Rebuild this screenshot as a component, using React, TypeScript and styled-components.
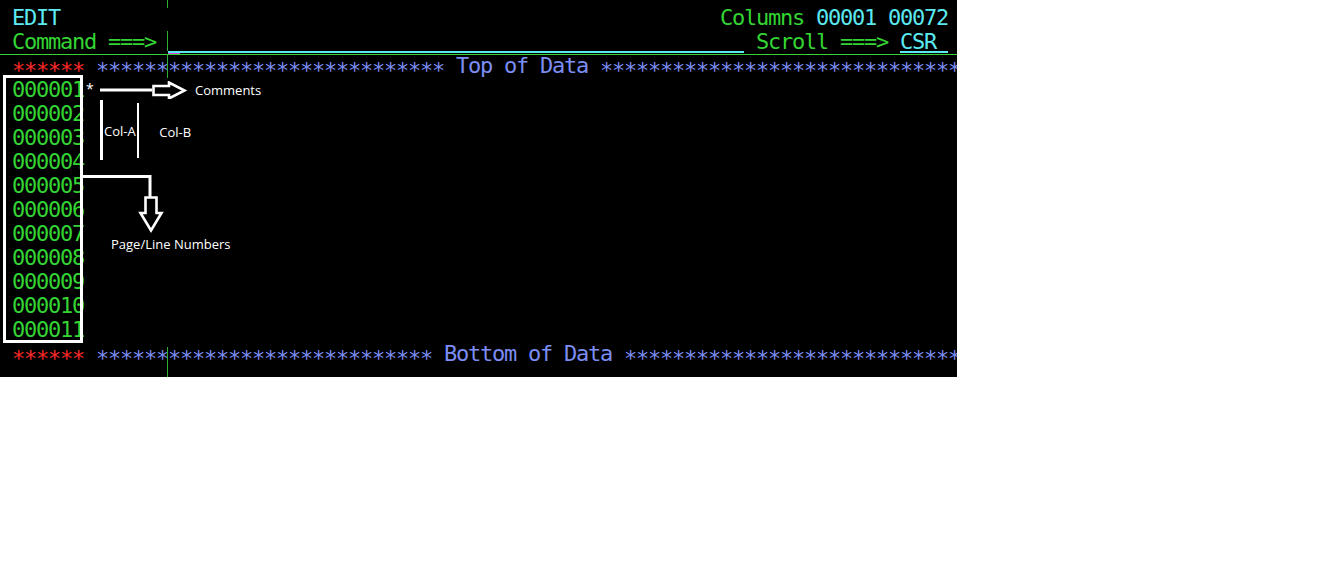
import styled, { createGlobalStyle } from "styled-components";

const GlobalStyle = createGlobalStyle`
  html, body {
    margin: 0;
    padding: 0;
    background: #ffffff;
  }
`;

const CYAN = "#5be9f2";
const GREEN = "#33d433";
const RED = "#ff2a2a";
const BLUE = "#7c8ef4";

const sp = (n: number) => " ".repeat(n);
const stars = (n: number) => "*".repeat(n);

const Screen = styled.div`
  position: relative;
  width: 957px;
  height: 377px;
  box-sizing: border-box;
  padding-top: 6px;
  background: #000000;
  overflow: hidden;
  font-family: "DejaVu Sans Mono", "Liberation Mono", monospace;
  font-size: 22px;
  letter-spacing: -1.245px;
  line-height: 24px;
  white-space: pre;
`;

const Row = styled.div`
  display: flex;
  height: 24px;
`;

const Text = styled.span<{ $color: string }>`
  color: ${(p) => p.$color};
`;

/* terminal asterisks sit on the middle of the cell */
const Stars = styled.span<{ $color: string }>`
  position: relative;
  top: 5px;
  color: ${(p) => p.$color};
`;

const Field = styled.span<{ $cursor?: boolean }>`
  color: ${CYAN};
  background: ${(p) =>
    p.$cursor
      ? `linear-gradient(#e040e0, #e040e0) left bottom / 12px 1px no-repeat,`
      : ""}
    linear-gradient(${CYAN}, ${CYAN}) left bottom 1px / 100% 2px no-repeat;
`;

const Separator = styled.div`
  height: 1px;
  margin-bottom: -1px;
  background: ${GREEN};
`;

const Crosshair = styled.div<{ $top: number; $height: number }>`
  position: absolute;
  left: 167px;
  top: ${(p) => p.$top}px;
  width: 1px;
  height: ${(p) => p.$height}px;
  background: #2fae2f;
`;

const Annotations = styled.div`
  position: absolute;
  inset: 0;
  pointer-events: none;
  font-family: "Open Sans", "Liberation Sans", sans-serif;
  font-size: 13px;
  line-height: 16px;
  letter-spacing: 0;
  color: #ffffff;
`;

const NumberBox = styled.div`
  position: absolute;
  left: 3px;
  top: 75px;
  width: 80px;
  height: 268px;
  box-sizing: border-box;
  border: 3px solid #ffffff;
`;

const CommentCallout = styled.div`
  position: absolute;
  left: 86px;
  top: 81px;
  height: 18px;
  display: flex;
  align-items: center;
  gap: 6px;
`;

const Star = styled.span`
  font-size: 14px;
  width: 7px;
  margin-top: -3px;
`;

const ColumnCallout = styled.div`
  position: absolute;
  left: 100px;
  top: 100px;
  height: 60px;
  display: flex;
  align-items: center;
  gap: 1px;
`;

const ColumnBar = styled.div<{ $height: number; $width: number }>`
  width: ${(p) => p.$width}px;
  height: ${(p) => p.$height}px;
  background: #ffffff;
`;

const ColumnLabel = styled.span<{ $gap?: number }>`
  margin-left: ${(p) => p.$gap ?? 0}px;
  margin-top: ${(p) => (p.$gap ? 4 : 1)}px;
`;

const PageLabel = styled.span`
  position: absolute;
  left: 111px;
  top: 236px;
`;

const Drawing = styled.svg`
  display: block;
  flex: none;
`;

const Connector = styled.svg`
  position: absolute;
  left: 80px;
  top: 170px;
`;

const lineNumbers = Array.from({ length: 11 }, (_, i) =>
  String(i + 1).padStart(6, "0")
);

export default function App() {
  return (
    <>
      <GlobalStyle />
      <Screen>
        <Row>
          <Text $color={CYAN}>{sp(1)}EDIT</Text>
          <Text $color={GREEN}>{sp(55)}Columns </Text>
          <Text $color={CYAN}>00001 00072</Text>
        </Row>
        <Row>
          <Text $color={GREEN}>{sp(1)}Command ===&gt;{sp(1)}</Text>
          <Field $cursor>{sp(48)}</Field>
          <Text $color={GREEN}>{sp(1)}Scroll ===&gt;{sp(1)}</Text>
          <Field>CSR </Field>
        </Row>
        <Separator />
        <Row>
          <Text $color={RED}>{sp(1)}</Text>
          <Stars $color={RED}>{stars(6)}</Stars>
          <Text $color={BLUE}>{sp(1)}</Text>
          <Stars $color={BLUE}>{stars(29)}</Stars>
          <Text $color={BLUE}> Top of Data </Text>
          <Stars $color={BLUE}>{stars(30)}</Stars>
        </Row>
        {lineNumbers.map((n) => (
          <Row key={n}>
            <Text $color={GREEN}>
              {sp(1)}
              {n}
            </Text>
          </Row>
        ))}
        <Row>
          <Text $color={RED}>{sp(1)}</Text>
          <Stars $color={RED}>{stars(6)}</Stars>
          <Text $color={BLUE}>{sp(1)}</Text>
          <Stars $color={BLUE}>{stars(28)}</Stars>
          <Text $color={BLUE}> Bottom of Data </Text>
          <Stars $color={BLUE}>{stars(28)}</Stars>
        </Row>

        <Crosshair $top={0} $height={8} />
        <Crosshair $top={31} $height={20} />
        <Crosshair $top={55} $height={23} />
        <Crosshair $top={347} $height={30} />

        <Annotations>
          <NumberBox />

          <CommentCallout>
            <Star>*</Star>
            <Drawing width="90" height="18" viewBox="99 81 90 18">
              <g fill="none" stroke="#ffffff" strokeWidth="2.6">
                <line x1="100" y1="90" x2="152" y2="90" strokeWidth="3" />
                <polygon points="153.5,86 169,86 169,82.5 184.5,90.5 169,98.5 169,95 153.5,95" />
              </g>
            </Drawing>
            <span>Comments</span>
          </CommentCallout>

          <ColumnCallout>
            <ColumnBar $width={3} $height={60} />
            <ColumnLabel>Col-A</ColumnLabel>
            <ColumnBar $width={2.5} $height={55} />
            <ColumnLabel $gap={19}>Col-B</ColumnLabel>
          </ColumnCallout>

          <Connector width="90" height="66" viewBox="80 170 90 66">
            <g fill="none" stroke="#ffffff" strokeWidth="2.6">
              <polyline points="83,176.5 150,176.5 150,197" strokeWidth="3" />
              <polygon points="145.5,197.5 156.5,197.5 156.5,213 161.5,213 151,230.5 140.5,213 145.5,213" />
            </g>
          </Connector>
          <PageLabel>Page/Line Numbers</PageLabel>
        </Annotations>
      </Screen>
    </>
  );
}
